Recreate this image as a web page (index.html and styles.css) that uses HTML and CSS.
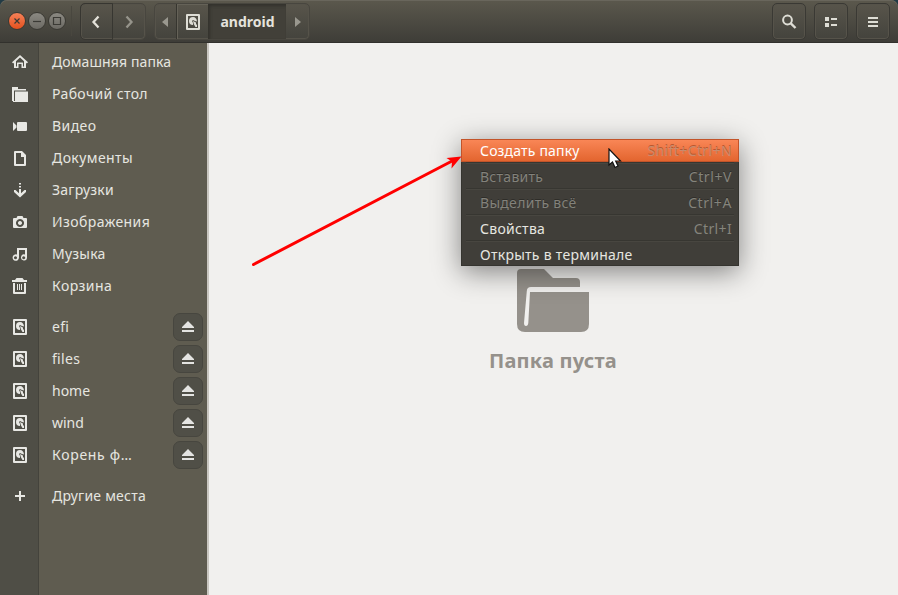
FILE: index.html
```
<!DOCTYPE html>
<html lang="ru">
<head>
<meta charset="utf-8">
<title>android</title>
<link rel="stylesheet" href="styles.css">
</head>
<body>
<svg class="defs" width="0" height="0">
  <symbol id="drive" viewBox="0 0 16 16"><path fill-rule="evenodd" d="M2 0h12a1 1 0 0 1 1 1v14a1 1 0 0 1-1 1H2a1 1 0 0 1-1-1V1a1 1 0 0 1 1-1zM3 2v12h10V2z"/><path d="M8 3a4 4 0 0 1 3.900 4.500L10 7 8 6 7 7l1 2v2A4 4 0 0 1 8 3z"/><path d="M8 7l3 1.500V10l1 1v2h-1.500L9 10.500z"/></symbol>
  <symbol id="eject" viewBox="0 0 12 12"><path d="M6 0l6 6v1H0V6zM0 9h12v2H0z"/></symbol>
</svg>
<div class="window">
  <header class="bar">
    <div class="controls">
      <span class="ctl close"><svg viewBox="0 0 16 16"><path d="M5.500 5.500l5 5M10.500 5.500l-5 5"/></svg></span>
      <span class="ctl"><svg viewBox="0 0 16 16"><path d="M4 8.500h8"/></svg></span>
      <span class="ctl"><svg viewBox="0 0 16 16"><path d="M4.500 4.500h7v7h-7z"/></svg></span>
    </div>
    <div class="group nav">
      <span class="btn back"><svg width="16" height="16" viewBox="0 0 16 16"><path class="chev" d="M10.500 2.500L5.500 8l5 5.500"/></svg></span>
      <span class="btn fwd"><svg width="16" height="16" viewBox="0 0 16 16"><path class="chev" d="M5.500 2.500l5 5.500-5 5.500"/></svg></span>
    </div>
    <div class="group path">
      <span class="btn arrow prev"><svg width="6" height="10"><path d="M6 0v10L0 5z"/></svg></span>
      <span class="btn disk"><svg width="16" height="16"><use href="#drive"/></svg></span>
      <span class="btn current"><span class="t-android">android</span></span>
      <span class="btn arrow"><svg width="6" height="10"><path d="M0 0v10l6-5z"/></svg></span>
    </div>
    <div class="tools">
      <span class="group btn"><svg width="16" height="16" viewBox="0 0 16 16"><circle class="ring" cx="6.500" cy="6" r="4.400"/><path class="handle" d="M9.800 9.300l4.700 4.700"/></svg></span>
      <span class="group btn"><svg width="16" height="16" viewBox="0 0 16 16"><path d="M2 3h4v4H2zM2 9h4v4H2zM8 4h6v2H8zM8 10h6v2H8z"/></svg></span>
      <span class="group btn"><svg width="16" height="16" viewBox="0 0 16 16"><path d="M3 3h10v2H3zM3 7h10v2H3zM3 11h10v2H3z"/></svg></span>
    </div>
  </header>
  <div class="body">
    <nav class="side">
      <div class="row"><svg class="ico" viewBox="0 0 16 16"><path fill-rule="evenodd" d="M8 1l8 7.200-1.200 1.300L14 8.800V14H9.500v-4h-3v4H2V8.800l-.8.700L0 8.200zM8 3.600L4 7.200V12.500h1V9q0-.5.500-.5h5q.5 0 .5.500v3.500h1V7.200z"/></svg><span class="lbl l1">Домашняя папка</span></div>
      <div class="row"><svg class="ico" viewBox="0 0 16 16"><path d="M0 1h6v2h8v1.500H2V15H0z"/><path d="M3 5.500h13V16H1V15h2z"/></svg><span class="lbl l2">Рабочий стол</span></div>
      <div class="row"><svg class="ico" viewBox="0 0 16 16"><path d="M6 4h8q1 0 1 1v7q0 1-1 1H6q-1 0-1-1V5q0-1 1-1zM1 4l3.500 3.500v2L1 13z"/></svg><span class="lbl l3">Видео</span></div>
      <div class="row"><svg class="ico" viewBox="0 0 16 16"><path fill-rule="evenodd" d="M3 1h7l4 4v10q0 1-1 1H3q-1 0-1-1V2q0-1 1-1zm1 2v11h8V7H9V3z"/></svg><span class="lbl l4">Документы</span></div>
      <div class="row"><svg class="ico" viewBox="0 0 16 16"><path d="M7 1h2v1.500H7zM7 4h2v1.500H7zM7 7h2v4.200L12.500 8H14v2l-6 5.500L2 10V8h1.500L7 11.200z"/></svg><span class="lbl l5">Загрузки</span></div>
      <div class="row"><svg class="ico" viewBox="0 0 16 16"><path fill-rule="evenodd" d="M5.500 2h5l1 2H14q1 0 1 1v8q0 1-1 1H2q-1 0-1-1V5q0-1 1-1h2.500zM8 5a4 4 0 1 0 .01 0zm0 2a2 2 0 1 1-.01 0z"/></svg><span class="lbl l6">Изображения</span></div>
      <div class="row"><svg class="ico" viewBox="0 0 16 16"><path fill-rule="evenodd" d="M5 2h10v9.500a3 3 0 1 1-2-2.900V4H7v7.500a3.200 3.200 0 1 1-2-2.900zM3.500 10.200a1.500 1.500 0 1 0 .01 0zm8.200 0a1.500 1.500 0 1 0 .01 0z"/></svg><span class="lbl l7">Музыка</span></div>
      <div class="row"><svg class="ico" viewBox="0 0 16 16"><path fill-rule="evenodd" d="M4.500 0h6l1.500 2H15v2H0V2h3zM1 5h2v9h9V5h2v10q0 1-1 1H2q-1 0-1-1zM5 6h1v6H5zM7 6h1v6H7zM9 6h1v6H9z"/></svg><span class="lbl l8">Корзина</span></div>
      <div class="gap"></div>
      <div class="row"><svg class="ico"><use href="#drive"/></svg><span class="lbl m1">efi</span><span class="eject"><svg width="12" height="12"><use href="#eject"/></svg></span></div>
      <div class="row"><svg class="ico"><use href="#drive"/></svg><span class="lbl m2">files</span><span class="eject"><svg width="12" height="12"><use href="#eject"/></svg></span></div>
      <div class="row"><svg class="ico"><use href="#drive"/></svg><span class="lbl m3">home</span><span class="eject"><svg width="12" height="12"><use href="#eject"/></svg></span></div>
      <div class="row"><svg class="ico"><use href="#drive"/></svg><span class="lbl m4">wind</span><span class="eject"><svg width="12" height="12"><use href="#eject"/></svg></span></div>
      <div class="row"><svg class="ico"><use href="#drive"/></svg><span class="lbl m5">Корень ф…</span><span class="eject"><svg width="12" height="12"><use href="#eject"/></svg></span></div>
      <div class="gap"></div>
      <div class="row"><svg class="ico" viewBox="0 0 16 16"><path d="M7 3h2v4h4v2H9v4H7V9H3V7h4z"/></svg><span class="lbl m6">Другие места</span></div>
    </nav>
    <main class="view">
      <div class="empty">
        <svg width="72" height="64" viewBox="0 0 72 64"><path d="M4 0h23l9 9h23q4 0 4 4v5H14q-4 0-4.200 4L7 54q0 3 2 3t2.300-3L13 23h59v32q0 8-8 8H8q-8 0-8-8V4q0-4 4-4z"/></svg>
        <span class="empty-text">Папка пуста</span>
      </div>
    </main>
  </div>
</div>
<div class="menu">
  <div class="item hot"><span class="c1">Создать папку</span><span class="key k1">Shift+Ctrl+N</span></div>
  <div class="sep"></div>
  <div class="item off"><span class="c2">Вставить</span><span class="key k2">Ctrl+V</span></div>
  <div class="sep"></div>
  <div class="item off"><span class="c3">Выделить всё</span><span class="key k3">Ctrl+A</span></div>
  <div class="sep"></div>
  <div class="item"><span class="c4">Свойства</span><span class="key k4">Ctrl+I</span></div>
  <div class="sep"></div>
  <div class="item"><span class="c5">Открыть в терминале</span></div>
</div>
<svg class="pointer-line" width="220" height="120" viewBox="0 0 220 120"><path class="shaft" d="M5.500 114.500L206 10"/><path d="M213.500 6.500L203.500 18.500 204 11.500 198.500 8z"/></svg>
<svg class="cursor" width="16" height="22" viewBox="0 0 16 22"><path d="M1 1v16l3.500-3 2.500 5.500 3-1.500-2.300-5h4.800z"/></svg>
</body>
</html>
```
FILE: styles.css
```
* { box-sizing: border-box; }
body {
  margin: 0;
  width: 898px;
  height: 595px;
  overflow: hidden;
  background: #223b45;
  font: 14px/20px "Noto Sans", "Open Sans", sans-serif;
  color: #e6e6e0;
}
svg { display: block; flex: none; }
.defs { position: absolute; }
.window { height: 595px; display: flex; flex-direction: column; }

.bar {
  height: 43px;
  flex: none;
  display: flex;
  align-items: flex-start;
  padding: 3px 8px 0;
  background: linear-gradient(#5b584d, #3e3d38);
  border-bottom: 1px solid #32312d;
  border-radius: 7px 7px 0 0;
  box-shadow: inset 0 1px #69665c;
}
.controls {
  display: flex;
  gap: 2px;
  align-items: center;
  width: 64px;
  height: 30px;
  margin: 3px 8px 0 0;
  border-right: 1px solid #49473f;
}
.ctl {
  width: 18px;
  height: 18px;
  border: 1px solid #3a3933;
  border-radius: 50%;
  background: linear-gradient(#8b8982, #6c6a64);
}
.ctl svg { fill: none; stroke: #3b3a35; stroke-width: 1.2; }
.ctl.close { background: linear-gradient(#f58158, #e4511e); }
.group {
  height: 37px;
  display: flex;
  border: 1px solid #3a3934;
  border-radius: 5px;
  background: linear-gradient(#58554b, #44433d);
  box-shadow: inset 0 0 0 1px #56534a;
}
.btn { display: flex; align-items: center; justify-content: center; fill: #deddd5; }
.chev { fill: none; stroke: #e4e2da; stroke-width: 2.3; }
.nav { width: 66px; margin-right: 8px; border-color: #48463f; }
.nav .btn { width: 33px; }
.nav .back { margin: -1px 0 -1px -1px; border: 1px solid #373631; border-radius: 5px 0 0 5px; }
.fwd .chev { stroke: #96948b; }
.path { width: 156px; border-color: #48463f; }
.arrow { width: 23px; fill: #9a988f; }
.prev { width: 21px; padding-right: 1px; }
.disk { width: 32px; border-left: 1px solid #36352f; box-shadow: inset 1px 1px #656258; }
.current {
  width: 78px;
  background: #424039;
  box-shadow: inset 2px 2px 3px #33322d;
  font-weight: bold;
  color: #e5e3dc;
}
.t-android { padding-left: 1px; }
.tools { display: flex; gap: 8px; margin-left: auto; }
.tools .btn { width: 34px; }
.ring { fill: none; stroke: #deddd5; stroke-width: 2; }
.handle { stroke: #deddd5; stroke-width: 2.4; }

.body { flex: 1; display: flex; }
.side {
  width: 209px;
  padding-top: 3px;
  border-right: 2px solid #c9c6c0;
  background: linear-gradient(90deg, #4f4e46 38px, #44433c 38px, #44433c 39px, #5f5c50 39px);
}
.row { height: 32px; display: flex; align-items: center; padding: 0 4px 0 12px; }
.ico { width: 16px; height: 16px; margin-right: 24px; fill: #e8e8e4; }
.lbl { white-space: nowrap; }
.l1 { letter-spacing: .11px; }
.l2 { letter-spacing: .37px; }
.l3, .l4, .l6, .l8 { letter-spacing: .42px; }
.l5, .l7, .m6 { letter-spacing: .22px; }
.m1, .m2 { letter-spacing: .3px; }
.m5 { letter-spacing: .7px; }
.gap { height: 9px; }
.eject {
  width: 30px;
  height: 28px;
  margin-left: auto;
  display: flex;
  align-items: center;
  justify-content: center;
  border: 1px solid #47463f;
  border-radius: 7px;
  background: #504f47;
  fill: #e4e4e2;
}
.view { flex: 1; background: #f1f0ee; }
.empty { display: flex; flex-direction: column; align-items: center; padding: 226px 1px 0 0; fill: #95918b; }
.empty svg { margin-right: 1px; }
.empty-text { margin-top: 14px; font-size: 20px; line-height: 28px; font-weight: bold; letter-spacing: .23px; color: #95918b; white-space: nowrap; }

.menu {
  position: absolute;
  left: 461px;
  top: 139px;
  width: 278px;
  height: 127px;
  background: #403e39;
  box-shadow: inset 0 0 0 1px #35342f, 0 6px 26px rgba(0, 0, 0, .46);
}
.item { height: 23px; display: flex; align-items: center; padding: 1px 7px 0 19px; white-space: nowrap; }
.hot {
  border: 1px solid #c2542a;
  padding: 1px 6px 0 18px;
  background: linear-gradient(#f98656, #e3652f);
  color: #fff;
}
.off { color: #83827b; text-shadow: 0 -1px #2e2d29; }
.key { margin-left: auto; color: #85847c; }
.hot .key { color: #c98b6d; text-shadow: 0 -1px #b9572f; }
.c1 { letter-spacing: .17px; }
.c2, .c4, .c5 { letter-spacing: .27px; }
.c3 { letter-spacing: .3px; }
.k1 { letter-spacing: .4px; }
.k2, .k3 { letter-spacing: .6px; }
.k4 { letter-spacing: .35px; }
.sep { height: 3px; margin: 0 5px; border-top: 1px solid #373631; }
.sep::after { content: ""; display: block; height: 1px; background: #484640; }
.pointer-line { position: absolute; left: 248px; top: 150px; fill: #f00; }
.shaft { stroke: #f00; stroke-width: 3; stroke-linecap: round; }
.cursor { position: absolute; left: 608px; top: 148px; fill: #fff; stroke: #111; stroke-width: 1.2; }
```
